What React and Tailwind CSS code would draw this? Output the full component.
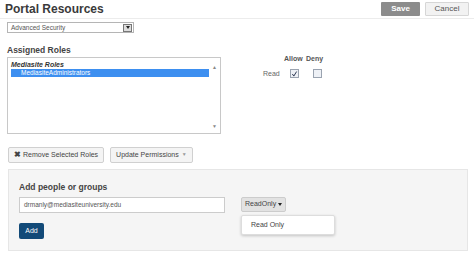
import React from "react";

function Check({ checked }) {
  return (
    <span className="flex h-[9px] w-[9px] items-center justify-center border border-[#9aa3b0] bg-[#eef1f6]">
      {checked && (
        <svg viewBox="0 0 10 10" className="h-[8px] w-[8px]">
          <path d="M2 5 L4 8 L8 1.5" fill="none" stroke="#2a3550" strokeWidth="1.4" />
        </svg>
      )}
    </span>
  );
}

export default function App() {
  return (
    <div className="relative h-[255px] w-[474px] overflow-hidden bg-white font-['Liberation_Sans',Arial,sans-serif] text-[#333]">
      <div className="flex h-[19px] items-center justify-between border-b border-[#ececec] px-[5px]">
        <h1 className="text-[12px] font-bold leading-[14px] text-[#3a3a3a]">Portal Resources</h1>
        <div className="flex gap-[5px]">
          <button className="h-[14px] w-[39px] rounded-[1px] bg-[#8c8c8c] text-[8px] font-bold text-white">Save</button>
          <button className="h-[14px] w-[44px] rounded-[1px] border border-[#d6d6d6] bg-[#f2f2f2] text-[8px] text-[#555]">Cancel</button>
        </div>
      </div>

      <div className="ml-[7px] mt-[3px] flex h-[11px] w-[127px] items-center justify-between border border-[#b5b5b5] pl-[3px] pr-[1px]">
        <span className="text-[6.5px] text-[#555]">Advanced Security</span>
        <span className="flex h-[8px] w-[9px] items-center justify-center border border-[#777] bg-[#ddd]">
          <span className="h-0 w-0 border-x-[2px] border-t-[3px] border-x-transparent border-t-[#222]" />
        </span>
      </div>

      <div className="mt-[12px] flex items-start">
        <div className="ml-[7px] w-[214px]">
          <div className="text-[8.5px] font-bold leading-[10px] text-[#444]">Assigned Roles</div>
          <div className="mt-[2px] flex h-[77px] border border-[#c8c8c8] pl-[3px] pt-[3px]">
            <div className="flex-1">
              <div className="text-[7px] font-bold italic leading-[8px] text-[#333]">Mediasite Roles</div>
              <div className="h-[8px] bg-[#3d8ff0] pl-[10px] text-[6.5px] leading-[8px] text-white">MediasiteAdministrators</div>
            </div>
            <div className="flex w-[11px] flex-col items-center justify-between py-[3px] text-[5px] text-[#888]">
              <span>▲</span>
              <span>▼</span>
            </div>
          </div>
        </div>
        <div className="ml-[42px] mt-[9px] grid grid-cols-[21px_22px_22px] items-center gap-y-[4px] text-[7px] text-[#555]">
          <span />
          <span className="font-semibold">Allow</span>
          <span className="font-semibold">Deny</span>
          <span className="text-[#666]">Read</span>
          <span className="pl-[6px]"><Check checked /></span>
          <span className="pl-[7px]"><Check /></span>
        </div>
      </div>

      <div className="ml-[8px] mt-[13px] flex gap-[6px]">
        <button className="flex h-[16px] items-center gap-[2px] rounded-[2px] border border-[#d0d0d0] bg-[#f4f4f4] px-[5px] text-[7px] text-[#444]">
          <span className="text-[8px] font-bold leading-none">✖</span> Remove Selected Roles
        </button>
        <button className="flex h-[16px] items-center gap-[3px] rounded-[2px] border border-[#d0d0d0] bg-[#f4f4f4] px-[5px] text-[7px] text-[#444]">
          Update Permissions <span className="text-[5px] text-[#999]">▼</span>
        </button>
      </div>

      <div className="ml-[8px] mt-[6px] h-[82px] w-[460px] border border-[#e6e6e6] bg-[#f5f5f5] pl-[10px] pt-[12px]">
        <div className="text-[8.5px] font-bold leading-[10px] text-[#444]">Add people or groups</div>
        <div className="mt-[5px] flex items-start gap-[16px]">
          <div className="flex flex-col gap-[10px]">
            <div className="flex h-[16px] w-[206px] items-center border border-[#ccc] bg-white pl-[4px] text-[6.5px] text-[#555]">drmanly@mediasiteuniversity.edu</div>
            <button className="h-[16px] w-[25px] rounded-[2px] bg-[#124a78] text-[7px] text-white">Add</button>
          </div>
          <div className="relative">
            <button className="flex h-[15px] items-center gap-[2px] rounded-[2px] border border-[#ccc] bg-[#e2e2e2] px-[3px] text-[7px] text-[#444]">
              ReadOnly <span className="h-0 w-0 border-x-[2px] border-t-[3px] border-x-transparent border-t-[#222]" />
            </button>
            <div className="absolute left-0 top-[18px] flex h-[20px] w-[94px] items-center rounded-[2px] border border-[#ddd] bg-white pl-[9px] text-[7px] text-[#444] shadow-[0_1px_3px_rgba(0,0,0,0.2)]">Read Only</div>
          </div>
        </div>
      </div>
    </div>
  );
}
